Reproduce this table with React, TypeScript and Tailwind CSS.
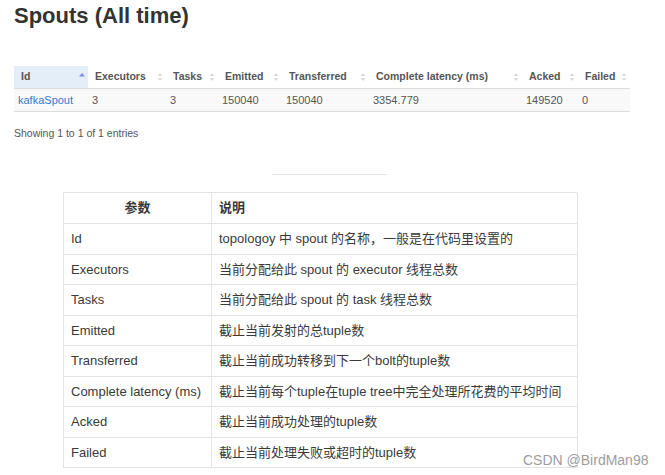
const spoutCols = [
  { label: "Id", value: "kafkaSpout", sorted: true },
  { label: "Executors", value: "3" },
  { label: "Tasks", value: "3" },
  { label: "Emitted", value: "150040" },
  { label: "Transferred", value: "150040" },
  { label: "Complete latency (ms)", value: "3354.779" },
  { label: "Acked", value: "149520" },
  { label: "Failed", value: "0" },
];

const params = [
  { name: "Id", desc: "topologoy 中 spout 的名称，一般是在代码里设置的" },
  { name: "Executors", desc: "当前分配给此 spout 的 executor 线程总数" },
  { name: "Tasks", desc: "当前分配给此 spout 的 task 线程总数" },
  { name: "Emitted", desc: "截止当前发射的总tuple数" },
  { name: "Transferred", desc: "截止当前成功转移到下一个bolt的tuple数" },
  { name: "Complete latency (ms)", desc: "截止当前每个tuple在tuple tree中完全处理所花费的平均时间" },
  { name: "Acked", desc: "截止当前成功处理的tuple数" },
  { name: "Failed", desc: "截止当前处理失败或超时的tuple数" },
];

function SortIcon({ active }: { active?: boolean }) {
  if (active) {
    return (
      <svg width="6" height="10" viewBox="0 0 6 10" className="shrink-0">
        <path d="M0 4.5 L3 1 L6 4.5 Z" fill="#7f8bd9" />
      </svg>
    );
  }
  return (
    <svg width="6" height="10" viewBox="0 0 6 10" className="shrink-0">
      <path d="M0.5 4 L3 1 L5.5 4 Z" fill="#dcdcdc" />
      <path d="M0.5 6 L3 9 L5.5 6 Z" fill="#dcdcdc" />
    </svg>
  );
}

export default function App() {
  return (
    <div className="relative w-[665px] h-[475px] overflow-hidden bg-white font-['Liberation_Sans','Noto_Sans_CJK_SC',sans-serif]">
      <h1 className="px-[14px] pt-[2px] text-[22px] leading-[28px] font-bold text-[#333]">
        Spouts (All time)
      </h1>

      {/* spout stats table */}
      <div className="ml-[14px] mt-[36px] w-[616px]">
        <div className="grid grid-cols-[74px_78px_52px_64px_87px_153px_56px_52px] h-[23px] border-b border-[#dcdcdc]">
          {spoutCols.map((c) => (
            <div
              key={c.label}
              className={`flex items-center justify-between pl-[7px] pr-[3px] text-[10.5px] font-bold text-[#555] whitespace-nowrap ${
                c.sorted ? "bg-[#e4eef8]" : ""
              }`}
            >
              <span>{c.label}</span>
              <SortIcon active={c.sorted} />
            </div>
          ))}
        </div>
        <div className="grid grid-cols-[74px_78px_52px_64px_87px_153px_56px_52px] h-[23px] bg-[#f9f9f9] border-b border-[#dcdcdc]">
          {spoutCols.map((c) => (
            <div
              key={c.label}
              className={`flex items-center pl-[4px] text-[11px] whitespace-nowrap ${
                c.sorted ? "text-[#2f7bd1]" : "text-[#555]"
              }`}
            >
              {c.value}
            </div>
          ))}
        </div>
      </div>

      <p className="ml-[14px] mt-[13px] text-[10.5px] leading-[16px] text-[#555]">
        Showing 1 to 1 of 1 entries
      </p>

      <div className="ml-[272px] mt-[33px] w-[115px] h-px bg-[#e4e4e4]" />

      {/* parameter description table */}
      <div className="ml-[63px] mt-[17px] w-[514px] border-t border-l border-[#e3e3e3] text-[13px] text-[#3a3a3a]">
        <div className="grid grid-cols-[148px_366px] h-[31px]">
          <div className="flex items-center justify-center border-r border-b border-[#e3e3e3] font-bold">
            参数
          </div>
          <div className="flex items-center px-[7px] border-r border-b border-[#e3e3e3] font-bold">
            说明
          </div>
        </div>
        {params.map((p) => (
          <div key={p.name} className="grid grid-cols-[148px_366px] h-[30.5px]">
            <div className="flex items-center px-[7px] border-r border-b border-[#e3e3e3] whitespace-nowrap">
              {p.name}
            </div>
            <div className="flex items-center px-[7px] border-r border-b border-[#e3e3e3] whitespace-nowrap">
              {p.desc}
            </div>
          </div>
        ))}
      </div>

      <span className="absolute left-[523px] top-[451px] text-[14px] leading-[18px] text-[#9d9d9d]">
        CSDN @BirdMan98
      </span>
    </div>
  );
}
